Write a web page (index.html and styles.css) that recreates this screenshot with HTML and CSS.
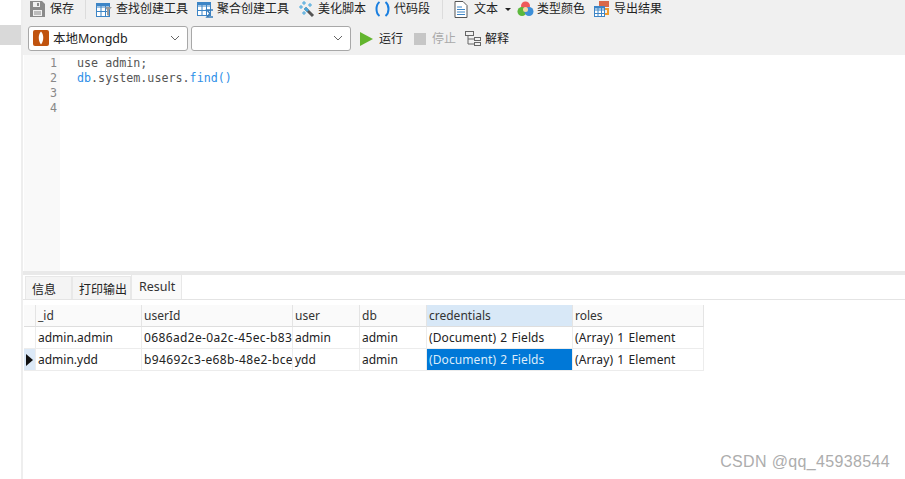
FILE: index.html
```html
<!DOCTYPE html>
<html lang="zh">
<head>
<meta charset="utf-8">
<title>Query</title>
<link rel="stylesheet" href="styles.css">
</head>
<body>
<div class="app">
  <aside class="side"><div class="side-sel"></div></aside>
  <main class="main">
    <div class="top">
      <div class="bar1">
        <span class="tool t-save"><svg width="15" height="16" viewBox="0 0 15 16"><path d="M0 0h12l3 3v13H0z" fill="#8a8a8a"/><rect x="3" y="1" width="7" height="5" fill="#f0f0f0"/><rect x="7" y="2" width="2" height="3" fill="#8a8a8a"/><rect x="3" y="9" width="9" height="6" fill="#f0f0f0"/><path d="M4 11h7M4 13h7" stroke="#8a8a8a"/></svg>保存</span>
        <i class="sep s1"></i>
        <span class="tool t-find"><svg width="17" height="17" viewBox="0 0 17 17"><rect x=".5" y="2.500" width="13" height="13" fill="#fff" stroke="#3d85c6"/><path d="M.5 6h13M.5 10.500h13M5 3v12M9.500 3v12" stroke="#3d85c6"/><rect x="1" y="2" width="12" height="3" fill="#3d85c6"/><path d="M9 6h7l-3 3v6l-2-1V9z" fill="#9a9a9a"/></svg>查找创建工具</span>
        <span class="tool t-agg"><svg width="17" height="17" viewBox="0 0 17 17"><rect x=".5" y="1.500" width="13" height="13" fill="#fff" stroke="#3d85c6"/><path d="M.5 5h13M.5 9.500h13M5 2v12M9.500 2v12" stroke="#3d85c6"/><rect x="1" y="1" width="12" height="3" fill="#3d85c6"/><path d="M16 9h-6l3 3.500-3 3.500h6" fill="none" stroke="#3a7cb8" stroke-width="1.500"/></svg>聚合创建工具</span>
        <span class="tool t-beauty"><svg width="17" height="17" viewBox="0 0 17 17"><path d="M7 7l8 8" stroke="#555" stroke-width="3"/><path d="M7 7l3 3" stroke="#45a5dc" stroke-width="3"/><path d="M6 0v4M4 2h4M1 6h4M3 4v4M12 2v4M10 4h4M6 10v4M4 12h4" stroke="#45a5dc"/></svg>美化脚本</span>
        <span class="tool t-snip"><svg width="15" height="16" viewBox="0 0 15 16"><path d="M4.500 1C.5 4 .5 12 4.500 15M10.500 1c4 3 4 11 0 14" fill="none" stroke="#1a7fe0" stroke-width="2"/></svg>代码段</span>
        <i class="sep s2"></i>
        <span class="tool t-text"><svg width="14" height="17" viewBox="0 0 14 17"><path d="M1 .5h8l4 4v12H1z" fill="#fff" stroke="#555"/><path d="M3 6h5M3 8.500h8M3 11h8M3 13.500h8" stroke="#3d85c6"/></svg>文本<b class="caret"></b></span>
        <span class="tool t-color"><svg width="17" height="16" viewBox="0 0 17 16"><circle cx="8.500" cy="5" r="4.500" fill="#ee5a5a"/><circle cx="5" cy="10.500" r="4.500" fill="#5cb83c"/><circle cx="12" cy="10.500" r="4.500" fill="#3d8fd8"/><circle cx="8.500" cy="8.500" r="2.500" fill="#f3d9a5"/></svg>类型颜色</span>
        <span class="tool t-export"><svg width="17" height="17" viewBox="0 0 17 17"><rect x="5" y="0" width="10" height="6" fill="#d9694a"/><rect x=".5" y="5.500" width="10" height="10" fill="#fff" stroke="#3d85c6"/><path d="M.5 9h10M.5 12.500h10M4 6v9M7.500 6v9" stroke="#3d85c6"/><rect x="1" y="5" width="9" height="2.500" fill="#3d85c6"/><path d="M11 8h3v5h-3" fill="none" stroke="#ef9b2d" stroke-width="2"/></svg>导出结果</span>
      </div>
      <div class="bar2">
        <div class="combo c-conn"><svg width="16" height="16" viewBox="0 0 16 16"><rect width="16" height="16" rx="2" fill="#c0530f"/><path d="M8 1.500c3 3 3 9 0 13-3-4-3-10 0-13z" fill="#fff"/></svg><span class="combo-text">本地Mongdb</span><svg class="chev" width="10" height="6" viewBox="0 0 10 6"><path d="M1 1l4 4 4-4" fill="none" stroke="#666"/></svg></div>
        <div class="combo c-db"><svg class="chev" width="10" height="6" viewBox="0 0 10 6"><path d="M1 1l4 4 4-4" fill="none" stroke="#666"/></svg></div>
        <span class="tool t-run"><svg width="13" height="14" viewBox="0 0 13 14"><path d="M0 0l13 7-13 7z" fill="#62b52e"/></svg>运行</span>
        <span class="tool t-stop"><i class="stop"></i>停止</span>
        <span class="tool t-explain"><svg width="17" height="16" viewBox="0 0 17 16" fill="none" stroke="#666"><rect x=".5" y=".5" width="8" height="4"/><rect x="9.500" y="6.500" width="6" height="3"/><rect x="9.500" y="11.500" width="6" height="3"/><path d="M3 5v8h6M3 8h6"/></svg>解释</span>
      </div>
    </div>
    <div class="editor">
      <div class="gutter"><div>1</div><div>2</div><div>3</div><div>4</div></div>
      <div class="code"><div>use admin;</div><div><span class="kw">db</span>.system.users.<span class="kw">find</span><span class="kw">()</span></div></div>
    </div>
    <div class="split"></div>
    <div class="tabs">
      <span class="tab tab-a">信息</span>
      <span class="tab tab-b">打印输出</span>
      <span class="tab tab-c">Result</span>
    </div>
    <div class="results">
      <div class="grid">
        <div class="h ind"></div><div class="h">_id</div><div class="h">userId</div><div class="h">user</div><div class="h">db</div><div class="h h-sel">credentials</div><div class="h">roles</div>
        <div class="c ind"></div><div class="c">admin.admin</div><div class="c c-hex">0686ad2e-0a2c-45ec-b83</div><div class="c">admin</div><div class="c">admin</div><div class="c c-val">(Document) 2 Fields</div><div class="c c-val">(Array) 1 Element</div>
        <div class="c ind ind-cur"><i class="arrow"></i></div><div class="c">admin.ydd</div><div class="c c-hex">b94692c3-e68b-48e2-bce</div><div class="c">ydd</div><div class="c">admin</div><div class="c c-val c-sel">(Document) 2 Fields</div><div class="c c-val">(Array) 1 Element</div>
      </div>
      <div class="mark">CSDN @qq_45938544</div>
    </div>
  </main>
</div>
</body>
</html>
```
FILE: styles.css
```css
* { box-sizing: border-box; }
html, body { margin: 0; height: 100%; overflow: hidden; background: #fff; }
body { font-family: "Noto Sans", "Noto Sans CJK SC", sans-serif; font-size: 12px; color: #222; }
.app { display: flex; height: 479px; }
.side { width: 21px; padding-top: 25px; flex: none; background: #fff; }
.side-sel { height: 20px; background: #d9d9d9; }
.main { flex: 1; min-width: 0; display: flex; flex-direction: column; border-left: 2px solid #eeeeee; }
.top { height: 55px; background: #f0f0f0; flex: none; }
.bar1 { height: 18px; display: flex; align-items: center; padding-left: 7px; }
.bar2 { height: 37px; display: flex; align-items: center; padding-left: 5px; padding-top: 3px; }
.tool { display: inline-flex; align-items: center; white-space: nowrap; line-height: 16px; font-size: 12px; }
.bar2 .tool { margin-top: 2px; }
.t-save svg { margin-right: 5px; }
.t-find svg, .t-agg svg, .t-beauty svg, .t-color svg, .t-export svg { margin-right: 3px; }
.t-snip svg { margin-right: 4px; }
.t-text svg { margin-right: 6px; }
.sep { width: 1px; height: 20px; background: #dcdcdc; flex: none; }
.s1 { margin: 0 10px 0 11px; }
.s2 { margin: 0 11px 0 12px; }
.t-agg { margin-left: 9px; }
.t-beauty { margin-left: 9px; }
.t-snip { margin-left: 9px; }
.t-color { margin-left: 6px; }
.t-export { margin-left: 9px; }
.caret { width: 0; height: 0; margin-left: 7px; border: 3px solid transparent; border-top: 3px solid #222; border-bottom: 0; }
.combo { height: 25px; background: #fff; border: 1px solid #a8a8a8; border-radius: 3px; display: flex; align-items: center; padding: 0 4px; flex: none; }
.combo-text { margin-left: 4px; padding-bottom: 2px; font-size: 12.500px; }
.chev { margin-left: auto; margin-right: 3px; }
.c-conn { width: 160px; }
.c-db { width: 160px; margin-left: 3px; }
.t-run { margin-left: 9px; }
.t-run svg { margin-right: 6px; }
.t-stop { margin-left: 11px; color: #aaa; }
.stop { width: 12px; height: 12px; background: #c6c6c6; margin-right: 6px; }
.t-explain { margin-left: 9px; }
.t-explain svg { margin-right: 3px; }
.editor { height: 216px; display: flex; flex: none; font-family: "DejaVu Sans Mono", monospace; font-size: 11.7px; line-height: 15px; background: #fff; padding-top: 0; }
.gutter { width: 36px; margin-left: 1px; background: #f9f9f9; text-align: right; padding: 1px 3px 0 0; color: #888; flex: none; }
.code { padding: 1px 0 0 17px; color: #555; }
.kw { color: #2f8fe8; }
.split { height: 4px; background: #e9e9e9; flex: none; }
.tabs { height: 25px; display: flex; align-items: flex-end; padding-left: 2px; border-bottom: 1px solid #e4e4e4; flex: none; background: #fff; }
.tab { height: 23px; display: flex; align-items: center; background: #f4f4f4; border: 1px solid #e8e8e8; border-bottom: 0; font-size: 12px; padding-top: 2px; }
.tab-a { width: 47px; padding-left: 6px; }
.tab-b { width: 59px; padding-left: 6px; white-space: nowrap; }
.tab-c { width: 51px; height: 25px; padding: 0 0 2px 7px; background: #fafafa; color: #333; font-size: 12.500px; }
.results { flex: 1; padding: 5px 0 0 1px; position: relative; }
.grid { display: grid; grid-template-columns: 12px 106px 151px 67px 67px 146px 131px; grid-auto-rows: 22px; width: 680px; }
.h, .c { border-right: 1px solid #ececec; border-bottom: 1px solid #dedede; padding-left: 2px; display: flex; align-items: center; white-space: nowrap; overflow: hidden; font-size: 12px; }
.c { border-bottom-color: #ececec; }
.h { background: #fafafa; border-right-color: #e4e4e4; color: #333; }
.h-sel { background: #d8e8f7; }
.c-hex { letter-spacing: .36px; }
.c-val { word-spacing: 1px; letter-spacing: .1px; }
.c-sel { background: #0078d7; color: #dcecfa; }
.ind { padding: 0; }
.ind-cur { background: #dce9f7; }
.arrow { width: 0; height: 0; border-left: 7px solid #111; border-top: 6px solid transparent; border-bottom: 6px solid transparent; margin-left: 2px; }
.mark { position: absolute; right: 15px; bottom: 8px; font-family: "Liberation Sans", sans-serif; font-size: 16px; color: #adadad; letter-spacing: .35px; }
```
